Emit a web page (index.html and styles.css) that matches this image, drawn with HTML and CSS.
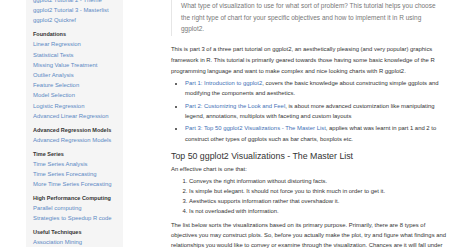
FILE: index.html
```html
<!DOCTYPE html>
<html>
<head>
<meta charset="utf-8">
<link rel="stylesheet" href="styles.css">
</head>
<body>
<div class="page">
  <nav class="sidebar">
    <div class="nav-list">
      <a class="nav-link" href="#">ggplot2 Tutorial 2 - Theme</a>
      <a class="nav-link" href="#">ggplot2 Tutorial 3 - Masterlist</a>
      <a class="nav-link" href="#">ggplot2 Quickref</a>
      <div class="nav-head">Foundations</div>
      <a class="nav-link" href="#">Linear Regression</a>
      <a class="nav-link" href="#">Statistical Tests</a>
      <a class="nav-link" href="#">Missing Value Treatment</a>
      <a class="nav-link" href="#">Outlier Analysis</a>
      <a class="nav-link" href="#">Feature Selection</a>
      <a class="nav-link" href="#">Model Selection</a>
      <a class="nav-link" href="#">Logistic Regression</a>
      <a class="nav-link" href="#">Advanced Linear Regression</a>
      <div class="nav-head">Advanced Regression Models</div>
      <a class="nav-link" href="#">Advanced Regression Models</a>
      <div class="nav-head">Time Series</div>
      <a class="nav-link" href="#">Time Series Analysis</a>
      <a class="nav-link" href="#">Time Series Forecasting</a>
      <a class="nav-link" href="#">More Time Series Forecasting</a>
      <div class="nav-head">High Performance Computing</div>
      <a class="nav-link" href="#">Parallel computing</a>
      <a class="nav-link" href="#">Strategies to Speedup R code</a>
      <div class="nav-head">Useful Techniques</div>
      <a class="nav-link" href="#">Association Mining</a>
    </div>
  </nav>
  <main class="content">
    <blockquote class="quote">What type of visualization to use for what sort of problem? This tutorial helps you choose the right type of chart for your specific objectives and how to implement it in R using ggplot2.</blockquote>
    <p class="para">This is part 3 of a three part tutorial on ggplot2, an aesthetically pleasing (and very popular) graphics framework in R. This tutorial is primarily geared towards those having some basic knowledge of the R programming language and want to make complex and nice looking charts with R ggplot2.</p>
    <ul class="parts">
      <li><a href="#">Part 1: Introduction to ggplot2</a>, covers the basic knowledge about constructing simple ggplots and modifying the components and aesthetics.</li>
      <li><a href="#">Part 2: Customizing the Look and Feel</a>, is about more advanced customization like manipulating legend, annotations, multiplots with faceting and custom layouts</li>
      <li><a href="#">Part 3: Top 50 ggplot2 Visualizations - The Master List</a>, applies what was learnt in part 1 and 2 to construct other types of ggplots such as bar charts, boxplots etc.</li>
    </ul>
    <h2 class="title">Top 50 ggplot2 Visualizations - The Master List</h2>
    <p class="para">An effective chart is one that:</p>
    <ol class="criteria">
      <li>Conveys the right information without distorting facts.</li>
      <li>Is simple but elegant. It should not force you to think much in order to get it.</li>
      <li>Aesthetics supports information rather that overshadow it.</li>
      <li>Is not overloaded with information.</li>
    </ol>
    <p class="para">The list below sorts the visualizations based on its primary purpose. Primarily, there are 8 types of objectives you may construct plots. So, before you actually make the plot, try and figure what findings and relationships you would like to convey or examine through the visualization. Chances are it will fall under</p>
  </main>
</div>
</body>
</html>
```
FILE: styles.css
```css
html, body {
  margin: 0;
  padding: 0;
  background: #fff;
  overflow: hidden;
}
body {
  font-family: "Liberation Sans", Arial, sans-serif;
  color: #333;
  font-size: 5.9px;
}
.page {
  display: flex;
  align-items: flex-start;
  height: 248px;
  padding-left: 26px;
}
.sidebar {
  width: 97px;
  height: 247px;
  background: #f5f5f5;
  flex-shrink: 0;
  overflow: hidden;
}
.nav-list {
  display: flex;
  flex-direction: column;
  margin-top: -5px;
  padding-left: 7px;
}
.nav-link {
  color: #5b89c4;
  text-decoration: none;
  line-height: 10.2px;
  white-space: nowrap;
}
.nav-head {
  font-weight: bold;
  font-size: 5.5px;
  color: #333;
  line-height: 10.2px;
  padding-top: 3.6px;
  white-space: nowrap;
}
.content {
  margin-left: 48px;
  width: 278px;
  flex-shrink: 0;
}
.quote {
  margin: 0;
  padding: 0.4px 10px 2.4px 9px;
  border-left: 1.5px solid #e6e6e6;
  color: #777;
  font-size: 6.5px;
  line-height: 11.2px;
}
.para {
  margin: 7.6px 0 0;
  line-height: 10.8px;
}
a {
  color: #3f71b6;
  text-decoration: none;
}
.parts {
  margin: 1.5px 0 0;
  padding-left: 14px;
  list-style: disc;
}
.parts li {
  line-height: 10.2px;
  margin-bottom: 2.4px;
}
.title {
  font-size: 8.8px;
  font-weight: normal;
  margin: 6px 0 0;
  line-height: 12px;
}
.title + .para {
  margin-top: 2.5px;
}
.criteria {
  margin: 2px 0 0;
  padding-left: 18px;
}
.criteria li {
  line-height: 9.8px;
}
.criteria + .para {
  margin-top: 3.5px;
  line-height: 10px;
}
```
